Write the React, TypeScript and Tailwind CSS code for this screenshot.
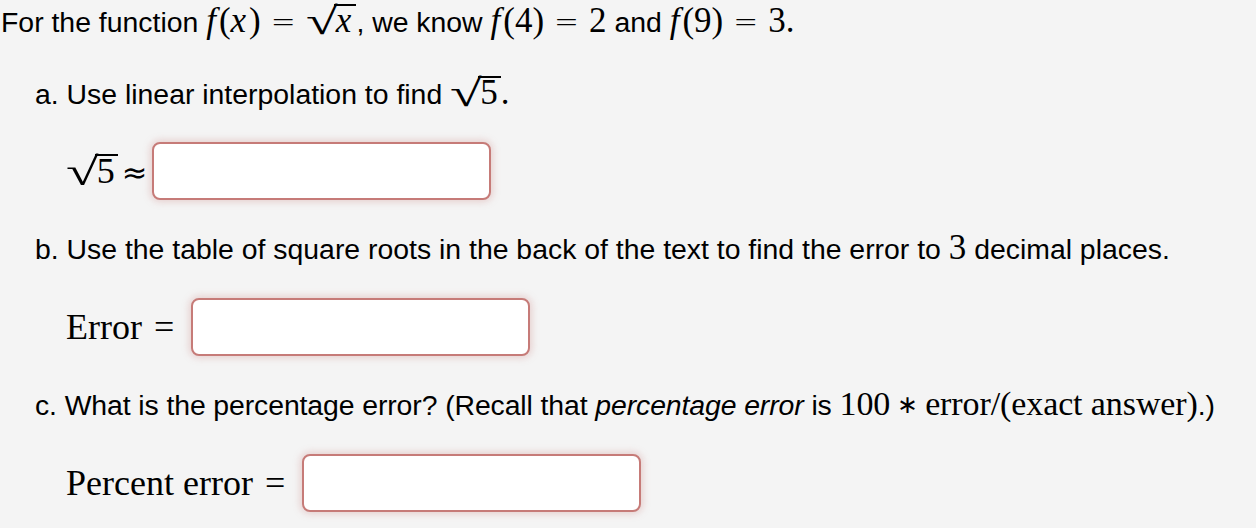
import type { ReactNode } from "react"

const serif = "font-['Liberation_Serif','Times_New_Roman',serif]"

function M({ children, size = "text-[35px]" }: { children: ReactNode; size?: string }) {
  return <span className={`${serif} ${size} leading-[28px]`}>{children}</span>
}

// italic letter with a little italic correction so it doesn't crowd the next glyph
function V({ children }: { children: ReactNode }) {
  return <i className="mr-[3px]">{children}</i>
}

function Sqrt({ children, pad = "pr-[3px]" }: { children: ReactNode; pad?: string }) {
  return (
    <span className="inline-block whitespace-nowrap leading-[28px]">
      <span className="inline-block relative top-[2px] text-[1.1em] leading-none origin-left scale-x-150 mr-[10px]">√</span>
      <span className={`inline-block border-t-2 border-black leading-[0.86em] -ml-[3px] pl-[2px] ${pad}`}>{children}</span>
    </span>
  )
}

function Rel({ children }: { children: ReactNode }) {
  return <span className="mx-[10px] font-['DejaVu_Sans',sans-serif] font-extralight text-[0.85em]">{children}</span>
}

function AnswerBox() {
  return (
    <input
      type="text"
      className="w-[339px] h-[58px] rounded-[8px] border-2 border-[#c67b78] bg-white shadow-[0_0_7px_2px_rgba(205,140,138,0.35)] outline-none"
    />
  )
}

function AnswerRow({ label, gap }: { label: ReactNode; gap: string }) {
  return (
    <div className={`flex items-center pl-[66px] mt-[28px] ${gap}`}>
      <span className={`${serif} text-[36px] leading-none whitespace-nowrap`}>{label}</span>
      <AnswerBox />
    </div>
  )
}

export default function App() {
  return (
    <div className="min-h-[528px] w-full bg-[#f4f4f4] text-black font-['Liberation_Sans',Arial,sans-serif] text-[28.4px] leading-[42px]">
      <p className="h-[42px] pl-[1px] whitespace-nowrap">
        For the function{" "}
        <M>
          <V>f</V>(<V>x</V>)<Rel>=</Rel>
          <Sqrt pad="pr-[5px]">
            <i>x</i>
          </Sqrt>
        </M>
        , we know{" "}
        <M>
          <V>f</V>(4)<Rel>=</Rel>2
        </M>{" "}
        and{" "}
        <M>
          <V>f</V>(9)<Rel>=</Rel>3.
        </M>
      </p>

      <p className="h-[42px] pl-[35px] mt-[30px] whitespace-nowrap">
        a. Use linear interpolation to find{" "}
        <M>
          <Sqrt>5</Sqrt>.
        </M>
      </p>
      <AnswerRow
        gap="gap-[5px]"
        label={
          <>
            <Sqrt>5</Sqrt>
            <span className="ml-[4px] font-['DejaVu_Sans',sans-serif] text-[0.85em]">≈</span>
          </>
        }
      />

      <p className="h-[42px] pl-[35px] mt-[28px] whitespace-nowrap">
        b. Use the table of square roots in the back of the text to find the error to <M>3</M> decimal places.
      </p>
      <AnswerRow
        gap="gap-[17px]"
        label={
          <>
            Error<span className="ml-[12px]">=</span>
          </>
        }
      />

      <p className="h-[42px] pl-[35px] mt-[28px] whitespace-nowrap tracking-[-0.1px]">
        c. What is the percentage error? (Recall that <i>percentage error</i> is{" "}
        <M size="text-[34px]">
          100<span className="mx-[7px] text-[25px] relative -top-[2px]">∗</span>error/(exact answer)
        </M>
        .)
      </p>
      <AnswerRow
        gap="gap-[17px]"
        label={
          <>
            Percent error<span className="ml-[12px]">=</span>
          </>
        }
      />
    </div>
  )
}
